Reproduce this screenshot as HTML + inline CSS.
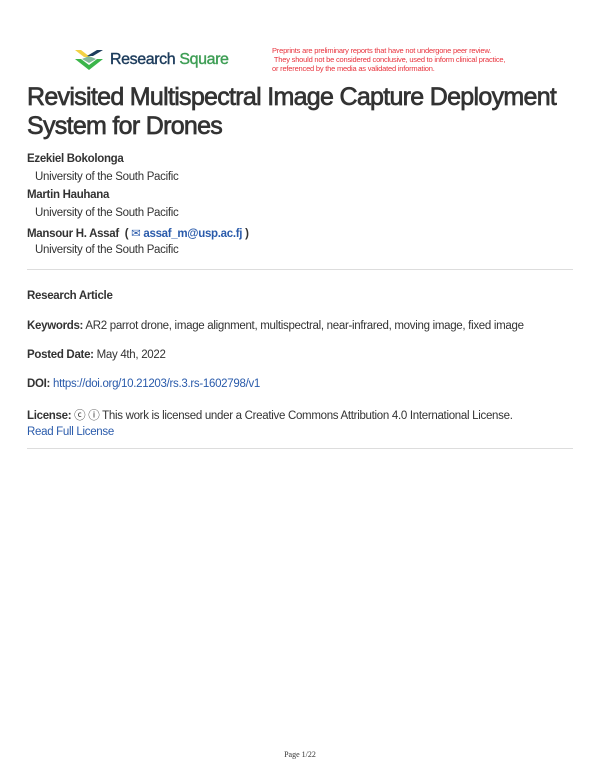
<!DOCTYPE html>
<html><head><style>
body{margin:0;width:600px;height:776px;background:#fff;font-family:"Liberation Sans",sans-serif;color:#333;position:relative;overflow:hidden}
.a{position:absolute;white-space:nowrap}
.s{font-size:11.5px;letter-spacing:-0.3px}
b{font-weight:bold;color:#333}
.l{color:#2a5bab}
.hr{position:absolute;left:27px;width:546px;height:1px;background:#ddd}
.red{color:#e8323c;font-size:7.5px;line-height:9px;letter-spacing:-0.2px}
</style></head><body>
<svg class="a" style="left:73px;top:47px" width="32" height="26" viewBox="0 0 32 26">
<polygon points="2,3 8,3 17,10 11,10" fill="#f2d144"/>
<polygon points="14,9 24,3 30,3 20,9" fill="#1d3c5c"/>
<polygon points="2,12 8,12 16,18 24,12 30,12 16,23" fill="#3bb54a"/>
<polygon points="9,12 16,9 23,12 16,16" fill="#2f8a55" opacity=".6"/>
</svg>
<div class="a" style="left:110px;top:51px;font-size:16px;color:#1d3c5c;letter-spacing:-0.4px;-webkit-text-stroke:0.4px">Research <span style="color:#3e9e55">Square</span></div>
<div class="a red" style="left:272px;top:46px">Preprints are preliminary reports that have not undergone peer review.<br>&nbsp;They should not be considered conclusive, used to inform clinical practice,<br>or referenced by the media as validated information.</div>
<div class="a" style="left:27px;top:83px;font-size:25px;line-height:29px;color:#333;letter-spacing:-0.7px;-webkit-text-stroke:0.7px #333">Revisited Multispectral Image Capture Deployment<br>System for Drones</div>
<div class="a s" style="left:27px;top:153px"><b>Ezekiel Bokolonga</b></div>
<div class="a s" style="left:35px;top:171px">University of the South Pacific</div>
<div class="a s" style="left:27px;top:189px"><b>Martin Hauhana</b></div>
<div class="a s" style="left:35px;top:207px">University of the South Pacific</div>
<div class="a s" style="left:27px;top:226px"><b>Mansour H. Assaf</b> &nbsp;<b>(</b> <span class="l">✉ <b style="color:#2a5bab">assaf_m@usp.ac.fj</b></span> <b>)</b></div>
<div class="a s" style="left:35px;top:244px">University of the South Pacific</div>
<div class="hr" style="top:269px"></div>
<div class="a s" style="left:27px;top:290px"><b>Research Article</b></div>
<div class="a s" style="left:27px;top:320px"><b>Keywords:</b> AR2 parrot drone, image alignment, multispectral, near-infrared, moving image, fixed image</div>
<div class="a s" style="left:27px;top:349px"><b>Posted Date:</b> May 4th, 2022</div>
<div class="a s" style="left:27px;top:378px"><b>DOI:</b> <span class="l">https://doi.org/10.21203/rs.3.rs-1602798/v1</span></div>
<div class="a s" style="left:27px;top:407px"><b>License:</b> ⓒ ⓘ This work is licensed under a Creative Commons Attribution 4.0 International License.</div>
<div class="a s l" style="left:27px;top:426px">Read Full License</div>
<div class="hr" style="top:448px"></div>
<div class="a" style="left:0;width:600px;text-align:center;top:750px;font-family:'Liberation Serif',serif;font-size:8px;color:#333">Page 1/22</div>
</body></html>
